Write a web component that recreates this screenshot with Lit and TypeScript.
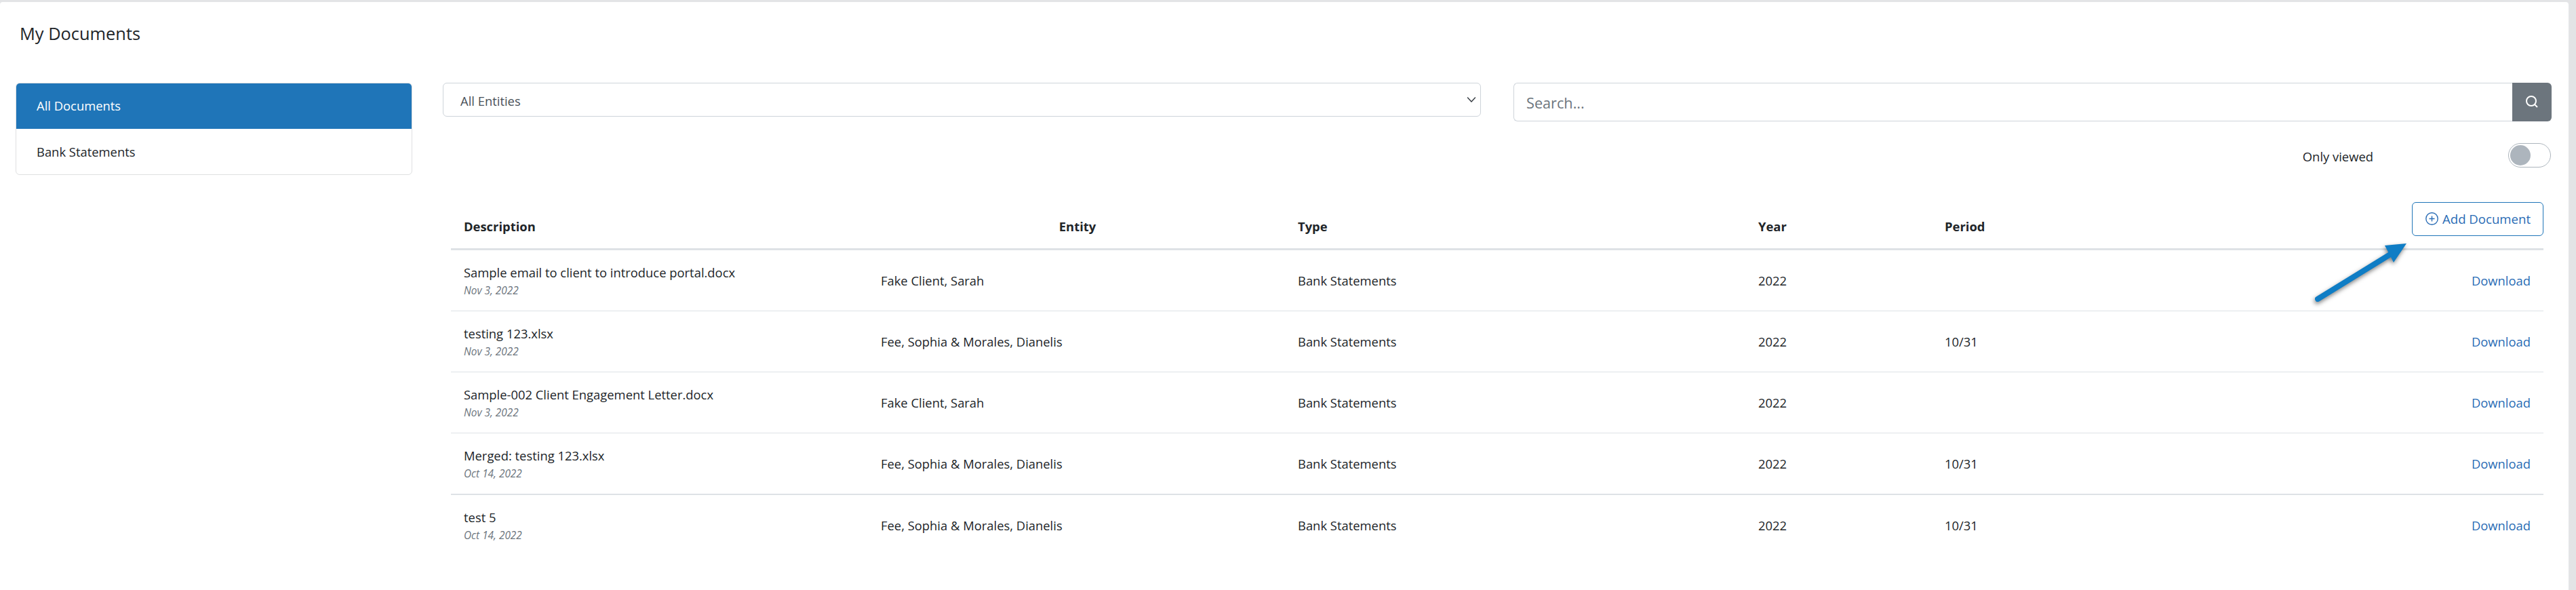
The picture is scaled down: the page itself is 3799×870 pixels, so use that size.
import { LitElement, html, css, svg } from "lit";
import { customElement } from "lit/decorators.js";

interface Doc { name: string; date: string; entity: string; year: string; period: string; }

const DOCS: Doc[] = [
  { name: "Sample email to client to introduce portal.docx", date: "Nov 3, 2022", entity: "Fake Client, Sarah", year: "2022", period: "" },
  { name: "testing 123.xlsx", date: "Nov 3, 2022", entity: "Fee, Sophia & Morales, Dianelis", year: "2022", period: "10/31" },
  { name: "Sample-002 Client Engagement Letter.docx", date: "Nov 3, 2022", entity: "Fake Client, Sarah", year: "2022", period: "" },
  { name: "Merged: testing 123.xlsx", date: "Oct 14, 2022", entity: "Fee, Sophia & Morales, Dianelis", year: "2022", period: "10/31" },
  { name: "test 5", date: "Oct 14, 2022", entity: "Fee, Sophia & Morales, Dianelis", year: "2022", period: "10/31" },
];

@customElement("app-root")
export class AppRoot extends LitElement {
  static styles = css`
    :host {
      display: block;
      font-family: "Open Sans", "Noto Sans", sans-serif;
      font-size: 18.4px;
      color: #212529;
    }
    * { box-sizing: border-box; }
    .frame {
      height: 870px;
      background: #e3e4e6;
      padding: 3px 11px 0 0;
    }
    .panel {
      position: relative;
      height: 867px;
      background: #fff;
      border-top-left-radius: 4px;
      border-top-right-radius: 4px;
      padding: 29px 25px 0 23px;
    }
    h1 {
      margin: 0 0 56px 6px;
      font-size: 25.4px;
      line-height: 34px;
      font-weight: 400;
    }
    .layout {
      display: grid;
      grid-template-columns: 585px 3110px;
      column-gap: 45px;
      align-items: start;
    }
    .side {
      border: 1px solid #dfe0e1;
      border-radius: 6px;
      overflow: hidden;
    }
    .side-item {
      height: 67px;
      padding-left: 30px;
      display: flex;
      align-items: center;
      line-height: 26px;
    }
    .side-item.active {
      height: 68px;
      margin: -1px -1px 0;
      padding-left: 31px;
      background: #1f75b8;
      color: #fff;
    }
    .filters {
      display: grid;
      grid-template-columns: 1531px 1531px;
      column-gap: 48px;
      align-items: start;
    }
    .select {
      height: 50px;
      border: 1px solid #ced4da;
      border-radius: 6px;
      padding: 2px 5px 0 25px;
      display: flex;
      align-items: center;
      justify-content: space-between;
      color: #495057;
    }
    .select svg { display: block; margin-top: -2px; }
    .search { display: flex; height: 57px; }
    .search-input {
      flex: 1;
      border: 1px solid #ced4da;
      border-right: 0;
      border-radius: 6px 0 0 6px;
      padding: 2px 0 0 18px;
      display: flex;
      align-items: center;
      font-size: 21.7px;
      color: #6c757d;
    }
    .search-btn {
      width: 58px;
      background: #6c757d;
      border-radius: 0 6px 6px 0;
      display: flex;
      align-items: center;
      justify-content: center;
      padding-bottom: 2px;
    }
    .viewed {
      display: flex;
      justify-content: flex-end;
      align-items: center;
      gap: 199px;
      margin: 32px 1px 0 0;
      height: 36px;
    }
    .viewed span { padding-top: 2px; }
    .toggle {
      width: 63px;
      height: 36px;
      border: 1px solid #adb5bd;
      border-radius: 18px;
      padding: 2px;
    }
    .knob {
      width: 30px;
      height: 30px;
      border-radius: 50%;
      background: #adb5bd;
    }
    .table { margin: 51px 12px 0; }
    .row {
      display: grid;
      grid-template-columns: 615px 615px 679px 275px 551px 1fr;
      height: 90px;
      border-bottom: 1px solid #dee2e6;
    }
    .row.thick { height: 91px; border-bottom-width: 2px; }
    .row:last-child { border-bottom: 0; }
    .row.head {
      height: 71px;
      border-bottom: 3px solid #dee2e6;
      font-weight: 700;
    }
    .row > div { padding: 0 19px; }
    .head > div { padding-top: 23px; line-height: 26px; }
    .head > .center { text-align: center; padding-left: 22px; }
    .cell { display: flex; align-items: center; line-height: 26px; }
    .row > .desc { padding-top: 20px; line-height: 26px; }
    .date { margin-top: 1px; font-size: 15.4px; font-style: italic; color: #6c757d; }
    .link { justify-content: flex-end; color: #2a6cb5; }
    .row > .action { padding: 0; display: flex; justify-content: flex-end; align-items: flex-start; }
    .add {
      width: 194px;
      height: 50px;
      border: 1px solid #1f75b8;
      border-radius: 6px;
      display: flex;
      align-items: center;
      gap: 6px;
      padding-left: 19px;
      font-weight: 400;
      font-size: 18.6px;
      color: #2a6cb5;
    }
    .add svg { display: block; flex: none; margin-top: -2px; }
    .arrow {
      position: absolute;
      left: 3400px;
      top: 340px;
      filter: drop-shadow(-1px 3px 3px rgba(0, 0, 0, 0.5));
    }
  `;

  render() {
    return html`
      <div class="frame">
        <div class="panel">
          <h1>My Documents</h1>
          <div class="layout">
            <nav class="side">
              <div class="side-item active">All Documents</div>
              <div class="side-item">Bank Statements</div>
            </nav>
            <section>
              <div class="filters">
                <div class="select">
                  <span>All Entities</span>
                  <svg width="16" height="12" viewBox="0 0 16 12" fill="none" stroke="#343a40" stroke-width="1.4" stroke-linecap="round" stroke-linejoin="round"><path d="M2.5 3l5.5 6 5.5-6" /></svg>
                </div>
                <div class="search">
                  <div class="search-input">Search...</div>
                  <div class="search-btn">
                    <svg width="18" height="18" viewBox="0 0 18 18" fill="none" stroke="#fff" stroke-width="2"><circle cx="8" cy="8" r="7" /><path d="M13 13l4 4" /></svg>
                  </div>
                </div>
              </div>
              <div class="viewed">
                <span>Only viewed</span>
                <div class="toggle"><div class="knob"></div></div>
              </div>
              <div class="table">
                <div class="row head">
                  <div>Description</div>
                  <div class="center">Entity</div>
                  <div>Type</div>
                  <div>Year</div>
                  <div>Period</div>
                  <div class="action">
                    <div class="add">
                      <svg width="19" height="19" viewBox="0 0 19 19" fill="none" stroke="#2a6cb5" stroke-width="1.4"><circle cx="9.5" cy="9.5" r="8.7" /><path d="M9.5 5.5v8M5.5 9.5h8" /></svg>
                      <span>Add Document</span>
                    </div>
                  </div>
                </div>
                ${DOCS.map((d, i) => html`
                  <div class="row ${i === 3 ? "thick" : ""}">
                    <div class="desc">
                      <div>${d.name}</div>
                      <div class="date">${d.date}</div>
                    </div>
                    <div class="cell">${d.entity}</div>
                    <div class="cell">Bank Statements</div>
                    <div class="cell">${d.year}</div>
                    <div class="cell">${d.period}</div>
                    <div class="cell link">Download</div>
                  </div>
                `)}
              </div>
            </section>
          </div>
          <svg class="arrow" width="160" height="110" viewBox="3400 340 160 110">
            ${svg`<path d="M3418 438L3530 369" stroke="#0f7dc5" stroke-width="8" stroke-linecap="round" fill="none" />
            <path d="M3549 356L3517 359L3530 384Z" fill="#0f7dc5" />`}
          </svg>
        </div>
      </div>
    `;
  }
}
